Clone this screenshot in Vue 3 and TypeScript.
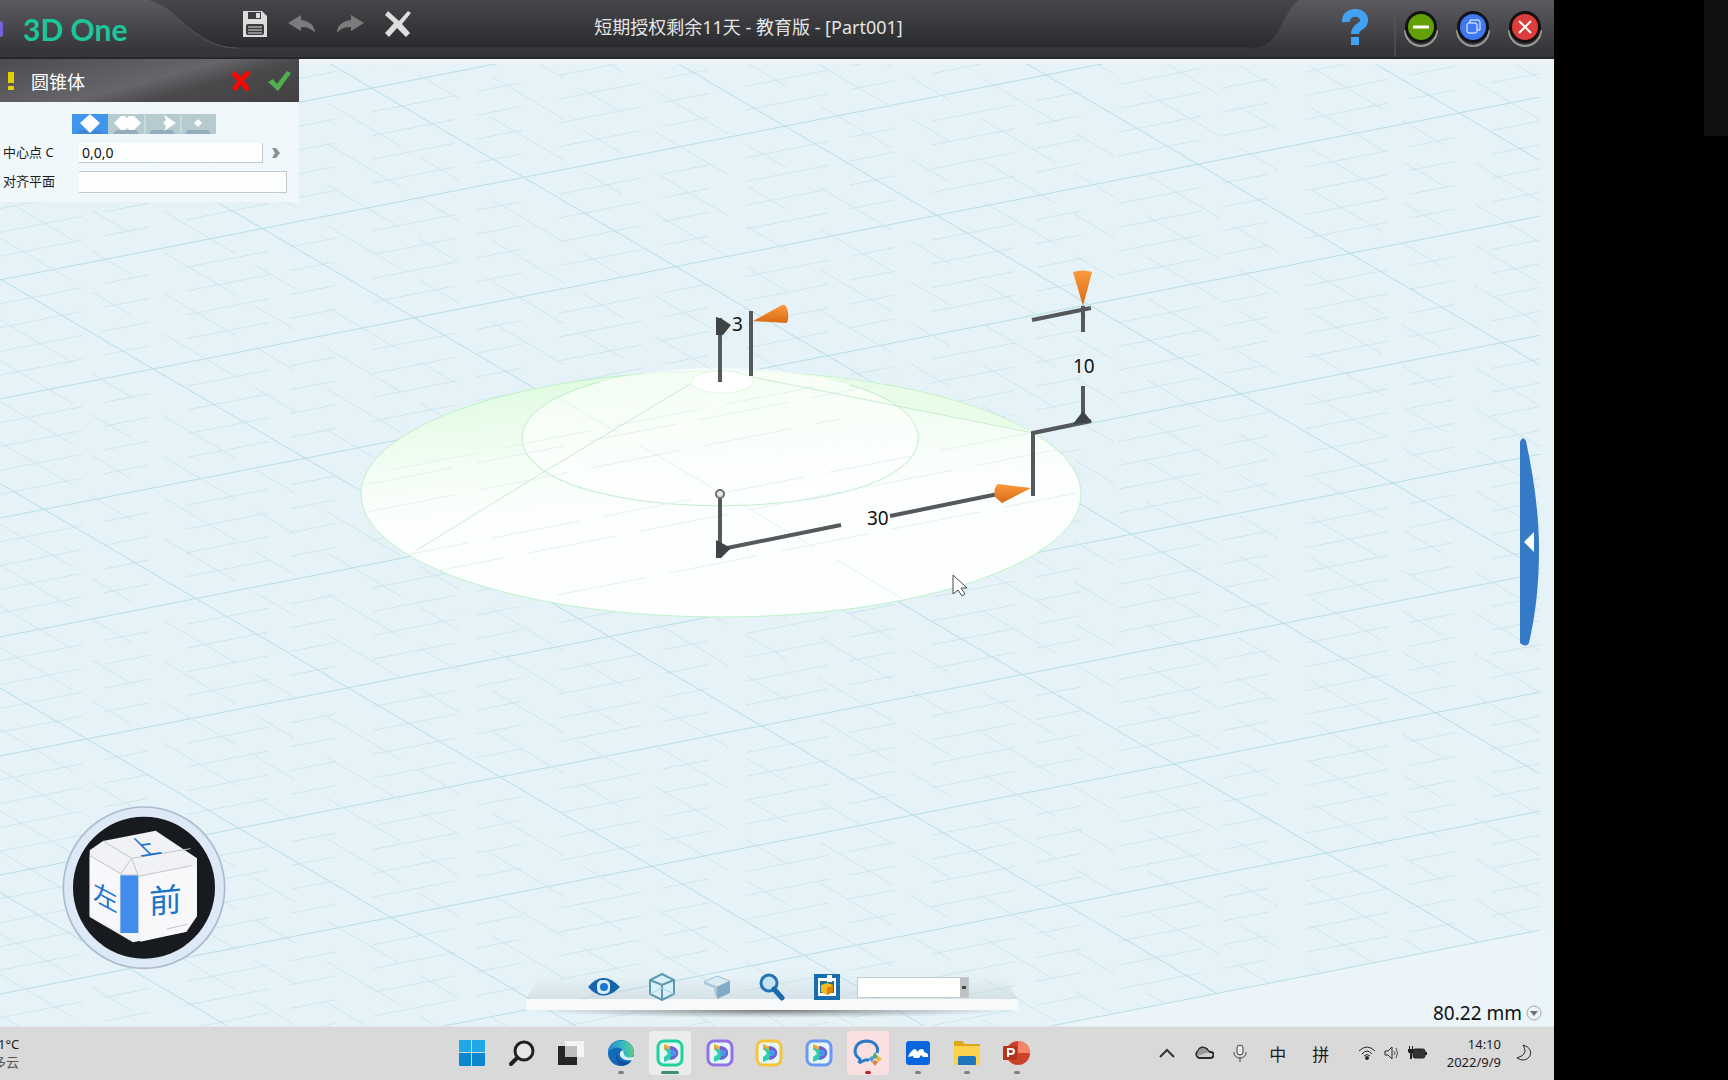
<script setup lang="ts">
import { ref } from 'vue'

interface GridLine {
  key: string
  x1: number
  y1: number
  x2: number
  y2: number
  major: boolean
}

const RISE = -0.196
const FALL = 0.587
const EDGE = 1232

function buildGrid(): GridLine[] {
  const lines: GridLine[] = []
  for (let i = 0; i <= 58; i++) {
    const b = EDGE - i * 23.8
    lines.push({ key: `a${i}`, x1: 0, y1: b, x2: 1540, y2: b + RISE * 1540, major: i % 5 === 0 })
  }
  for (let i = 0; i <= 50; i++) {
    const b = 1097 - i * 40.9
    // each falling line stops where it meets the front edge of the work plane
    const stop = Math.min(1540, (EDGE - b) / (FALL - RISE))
    lines.push({ key: `b${i}`, x1: 0, y1: b, x2: stop, y2: b + FALL * stop, major: i % 5 === 0 })
  }
  return lines
}

const grid = buildGrid()
const center = ref('0,0,0')
const plane = ref('')
const filter = ref('')
const mode = ref(0)
const modes = ['基体', '加运算', '减运算', '交运算']
const suite = [
  { name: '3D One 教育版', color: '#1fd19a', active: true },
  { name: '3D One Plus', color: '#9273e6', active: false },
  { name: '3D One Cut', color: '#f6c33c', active: false },
  { name: '3D One AI', color: '#6b97f5', active: false },
]
</script>

<template>
  <div class="screen">
    <main class="desktop">
      <header class="titlebar">
        <svg class="chrome" viewBox="0 0 1554 59" preserveAspectRatio="none" aria-hidden="true">
          <defs>
            <linearGradient id="side" x1="0" y1="0" x2="0" y2="1">
              <stop offset="0" stop-color="#5b5a5f" />
              <stop offset="0.6" stop-color="#414145" />
              <stop offset="1" stop-color="#303034" />
            </linearGradient>
            <linearGradient id="mid" x1="0" y1="0" x2="0" y2="1">
              <stop offset="0" stop-color="#47474a" />
              <stop offset="1" stop-color="#292b2e" />
            </linearGradient>
          </defs>
          <rect width="1554" height="59" fill="url(#side)" />
          <rect y="48" width="1554" height="11" fill="#34363a" />
          <path d="M148 0C170 7 178 20 194 32C210 43 220 48 238 48H1250C1282 48 1278 18 1299 0Z" fill="url(#mid)" />
          <path d="M148 0C170 7 178 20 194 32C210 43 220 48 238 48" fill="none" stroke="#58585c" />
          <path d="M238 48H1250" stroke="#3e4144" />
          <path d="M1395 12V59" stroke="#5c5c60" />
          <path d="M0 58H1554" stroke="#27272a" stroke-width="2" />
        </svg>
        <div class="brand"><span class="badge"></span>3D One</div>
        <div class="quick">
          <button aria-label="保存">
            <svg width="26" height="28" viewBox="0 0 26 28"><path d="M1 1H20L25 6V27H1Z" fill="#dcdcdc" /><path d="M6 2H19V9H6Z" fill="#3c3c3f" /><path d="M14 3H18V8H14Z" fill="#dcdcdc" /><rect x="4" y="14" width="18" height="11" rx="2" fill="#3c3c3f" /><path d="M6 17H20M6 20H20M6 23H20" stroke="#dcdcdc" /></svg>
          </button>
          <button aria-label="撤销">
            <svg width="28" height="20" viewBox="0 0 28 20"><path d="M0 9L13 1V6C22 7 27 12 27 19C23 14 19 13 13 13V17Z" fill="#7b7b7d" /></svg>
          </button>
          <button aria-label="重做">
            <svg width="28" height="20" viewBox="0 0 28 20"><path d="M28 9L15 1V6C6 7 1 12 1 19C5 14 9 13 15 13V17Z" fill="#7b7b7a" /></svg>
          </button>
          <button aria-label="删除">
            <svg width="28" height="28" viewBox="0 0 28 28"><path d="M4 1L15 11L24 1L27 3L18 14L26 23L22 27L13 18L5 27L1 23L10 13L1 5Z" fill="#dedede" /></svg>
          </button>
        </div>
        <h1 class="title">短期授权剩余11天 - 教育版 - [Part001]</h1>
        <div class="window-controls">
          <button class="help" aria-label="帮助">
            <svg width="28" height="38" viewBox="0 0 28 38"><path d="M5 13C4 1 24 1 23 12C23 18 14 17 14 25" fill="none" stroke="#42a2f1" stroke-width="8" /><path d="M10 28H18V36H10Z" fill="#42a2f1" /></svg>
          </button>
          <button aria-label="最小化">
            <svg width="36" height="40" viewBox="0 0 36 40"><path d="M2 22A16 16 0 0 0 34 22" fill="none" stroke="#9a9a94" stroke-width="2" /><circle cx="18" cy="19" r="16" fill="#111512" /><circle cx="18" cy="19" r="13" fill="#62a006" /><path d="M10 19H26" stroke="#fff" stroke-width="3" /></svg>
          </button>
          <button aria-label="还原">
            <svg width="36" height="40" viewBox="0 0 36 40"><path d="M2 22A16 16 0 0 0 34 22" fill="none" stroke="#9a9a94" stroke-width="2" /><circle cx="18" cy="19" r="16" fill="#10131c" /><circle cx="18" cy="19" r="13" fill="#3f78f0" /><rect x="12" y="15" width="10" height="10" rx="2" fill="none" stroke="#fff" /><path d="M15 15V12H23Q25 12 25 14V22H22" fill="none" stroke="#fff" /></svg>
          </button>
          <button aria-label="关闭">
            <svg width="36" height="40" viewBox="0 0 36 40"><path d="M2 22A16 16 0 0 0 34 22" fill="none" stroke="#9a9a94" stroke-width="2" /><circle cx="18" cy="19" r="16" fill="#170f10" /><circle cx="18" cy="19" r="13" fill="#dd3d3c" /><path d="M12 13L24 25M24 13L12 25" stroke="#fff" stroke-width="2" /></svg>
          </button>
        </div>
      </header>

      <section class="viewport">
        <svg class="scene" viewBox="0 59 1554 967" preserveAspectRatio="xMidYMid slice" role="img" aria-label="圆锥体预览">
          <defs>
            <linearGradient id="cone" x1="0.25" y1="0" x2="0.45" y2="0.8">
              <stop offset="0" stop-color="#defbdd" />
              <stop offset="0.4" stop-color="#f3fef3" />
              <stop offset="0.7" stop-color="#fff" />
            </linearGradient>
            <linearGradient id="amber" x1="0" y1="0" x2="0" y2="1">
              <stop offset="0" stop-color="#fb9a3c" />
              <stop offset="1" stop-color="#d96a14" />
            </linearGradient>
          </defs>
          <rect y="59" width="1554" height="967" fill="#e8f4f8" />
          <path d="M0 59H1554V927L0 1232Z" fill="#e5f3f8" />
          <path d="M0 1232L1540 930V1026H0Z" fill="#ebf4f9" />
          <line v-for="l in grid" :key="l.key" :x1="l.x1" :y1="l.y1" :x2="l.x2" :y2="l.y2" :class="l.major ? 'major' : 'minor'" />
          <path d="M0 59H1554V64H0Z" fill="#eef4f7" />
          <ellipse cx="721" cy="494" rx="360" ry="123" fill="url(#cone)" fill-opacity="0.94" stroke="#bdf3c8" />
          <path d="M721 371C850 371 960 395 1033 432L753 377Z" fill="#e9fce7" />
          <ellipse cx="720" cy="437" rx="198" ry="69" fill="#fff" fill-opacity="0.6" />
          <path d="M600 382C492 410 500 470 600 493C670 510 770 510 840 493C940 470 945 412 850 385" fill="none" stroke="#bfeecb" />
          <g class="cone-grid">
            <path d="M380 560L1050 429M445 617L1076 493M540 387L905 600M390 470L900 370M364 485L1000 361M367 512L840 419M416 575L1076 446" />
          </g>
          <path d="M690 384L547 470L417 550M752 377L1033 433" fill="none" stroke="#c9ecd2" />
          <ellipse cx="722" cy="382" rx="31" ry="11" fill="#fff" stroke="#e0f8e2" />
          <g stroke="#55595c" stroke-width="4" fill="none">
            <path d="M720 318V382M751 311V376M720 498V557M1033 496V433L1091 421M1083 386V414M1083 306V332M1032 320L1091 308M722 549L841 525M890 516L998 494" />
          </g>
          <path d="M716 317L722 319L731 325L723 335H716ZM716 540L731 548L721 558H716ZM1083 411L1073 424L1092 422Z" fill="#3e4347" />
          <circle cx="720" cy="494" r="4" fill="#e5e8e8" stroke="#6c7073" stroke-width="2" />
          <g fill="url(#amber)">
            <path d="M753 321L782 305Q786 303 788 312Q789 322 786 323Z" />
            <path d="M1031 488L998 484Q993 488 995 497L1002 503Z" />
            <path d="M1083 306L1073 272Q1083 269 1092 272Z" />
          </g>
          <g class="dimension">
            <text x="732" y="331">3</text>
            <text x="867" y="525">30</text>
            <text x="1073" y="373">10</text>
          </g>
          <path d="M953 575V594L958 590L962 596L965 594L961 588H967Z" fill="#fff" stroke="#4b4b4b" />
        </svg>

        <form class="panel" @submit.prevent>
          <div class="panel-head">
            <svg width="8" height="18" viewBox="0 0 8 18" aria-hidden="true"><path d="M1 0H7V11H1ZM1 14H7V18H1Z" fill="#e3cf00" /></svg>
            <h2>圆锥体</h2>
            <button type="button" aria-label="取消">
              <svg width="22" height="22" viewBox="0 0 22 22"><path d="M3 3Q10 9 18 20M19 2Q10 10 4 20" stroke="#fb0505" stroke-width="5" fill="none" /></svg>
            </button>
            <button type="submit" aria-label="确定">
              <svg width="24" height="22" viewBox="0 0 24 22"><path d="M0 12L5 9L9 14L19 1L23 3L10 21Z" fill="#4fb04e" /></svg>
            </button>
          </div>
          <div class="modes">
            <button v-for="(m, i) in modes" :key="m" type="button" :aria-label="m" :class="{ on: mode === i }" @click="mode = i">
              <svg width="36" height="20" viewBox="0 0 36 20">
                <path d="M8 16H28L31 20H5Z" fill="#456a8d" fill-opacity="0.3" />
                <path v-if="i === 0" d="M18 0L28 9L18 19L8 9Z" fill="#fff" />
                <path v-else-if="i === 1" d="M6 9L13 2H17L19 4L21 2H26L33 9L26 16H21L19 14L17 16H13Z" fill="#fff" />
                <path v-else-if="i === 2" d="M20 1L32 9L20 17L22 12L19 9L22 6Z" fill="#fff" />
                <path v-else d="M18 5L22 9L18 13L14 9Z" fill="#fff" />
                <path v-if="i > 1" d="M1 1V19" stroke="#d9e8eb" />
              </svg>
            </button>
          </div>
          <div class="field">
            <label for="center">中心点 C</label>
            <input id="center" v-model="center" class="point" type="text" />
            <button type="button" aria-label="更多">
              <svg width="10" height="10" viewBox="0 0 10 10"><path d="M0 0H4L8 5L4 10H0L3 5Z" fill="#8b9196" /></svg>
            </button>
          </div>
          <div class="field">
            <label for="plane">对齐平面</label>
            <input id="plane" v-model="plane" class="plane" type="text" />
          </div>
        </form>

        <svg class="nav-cube" width="166" height="166" viewBox="182 76 498 498" role="img" aria-label="视图导航">
          <circle cx="431" cy="324" r="242" fill="#dde9f6" stroke="#a9bbcd" stroke-width="5" />
          <circle cx="431" cy="324" r="213" fill="#171a1f" />
          <path d="M268 212L308 184L466 153L590 236V410L558 456L398 488L268 412Z" fill="#f1f2f6" />
          <path d="M268 228L360 286V458L268 408Z" fill="#f8f8fc" />
          <path d="M414 290L578 258L590 270V404L558 456L420 486Z" fill="#f8f8fb" />
          <path d="M360 286H414V460H360Z" fill="#418cec" />
          <path d="M268 228L362 282L394 236L308 184M394 236L570 207M394 236L414 290L574 258M360 286H414M500 448L560 434" fill="none" stroke="#c2c5cb" stroke-width="3" />
          <g class="face">
            <text x="446" y="456" font-size="98" transform="skewY(-6) translate(0 -6)">前</text>
            <text x="278" y="212" font-size="74" transform="skewY(28)">左</text>
            <text x="0" y="0" font-size="68" transform="translate(420 230) rotate(-9) skewX(36)">上</text>
          </g>
        </svg>

        <div class="view-tools">
          <div class="tool-row">
            <button aria-label="显示">
              <svg width="32" height="20" viewBox="0 0 32 20"><path d="M0 10Q15 -8 32 10Q15 27 0 10Z" fill="#1765ad" /><rect x="9" y="3" width="13" height="14" rx="5" fill="#d8ecfa" /><circle cx="16" cy="10" r="4" fill="#1b76d2" /></svg>
            </button>
            <button aria-label="线框">
              <svg width="26" height="28" viewBox="0 0 26 28"><path d="M13 1L25 7V21L13 27L1 21V7Z" fill="#d7f0f7" stroke="#6097ad" stroke-width="2" /><path d="M1 7L13 12L25 7M13 12V27" fill="none" stroke="#6097ad" stroke-width="2" /><path d="M1 21L13 15L25 21" fill="none" stroke="#b0d2de" /></svg>
            </button>
            <button aria-label="着色">
              <svg width="26" height="24" viewBox="0 0 26 24"><path d="M0 7L13 1L26 6L13 12Z" fill="#d9ecf3" stroke="#a6bccc" /><path d="M0 7L13 12V23L11 20L10 13L0 9Z" fill="#a9c8da" /><path d="M13 12L26 6V18L13 24Z" fill="#83abc8" /></svg>
            </button>
            <button aria-label="缩放">
              <svg width="26" height="28" viewBox="0 0 26 28"><circle cx="10" cy="10" r="8" fill="#c3e3f0" stroke="#2474b5" stroke-width="3" /><path d="M15 16L23 25" stroke="#1b69ac" stroke-width="5" stroke-linecap="round" /></svg>
            </button>
            <button aria-label="选择实体">
              <svg width="26" height="26" viewBox="0 0 26 26"><rect width="26" height="26" fill="#176daf" /><rect x="4" y="4" width="18" height="18" fill="#fff" /><path d="M6 7H20V19H6Z" fill="#187093" /><path d="M13 1H18V8H13Z" fill="#fff" /><path d="M7 11L13 9L19 11V18L13 21L7 18Z" fill="#f5ba22" /><path d="M13 14L19 11V18L13 21Z" fill="#d98310" /></svg>
            </button>
            <select v-model="filter" aria-label="过滤器"><option value=""></option></select>
          </div>
          <div class="shelf"></div>
          <div class="shelf-shadow"></div>
        </div>

        <button class="drawer" aria-label="展开资源库">
          <svg width="20" height="210" viewBox="0 0 20 210"><path d="M0 4Q3 -3 6 3C14 40 19 78 19 110C19 150 15 178 9 205Q6 210 0 205Z" fill="#347ac7" /><path d="M4 104L14 94V114Z" fill="#fff" /></svg>
        </button>

        <div class="measure">
          <span>80.22 mm</span>
          <button aria-label="单位">
            <svg width="16" height="16" viewBox="0 0 16 16"><circle cx="8" cy="8" r="7" fill="#eef3f5" stroke="#a2aaae" /><path d="M4 6H12L8 11Z" fill="#697176" /></svg>
          </button>
        </div>
      </section>

      <footer class="taskbar">
        <div class="weather"><span class="temp">1°C</span><span class="sky">多云</span></div>
        <nav class="apps">
          <button aria-label="开始"><svg width="26" height="26" viewBox="0 0 26 26"><path d="M0 1Q0 0 1 0H12V12H0ZM13 0H25Q26 0 26 1V12H13Z" fill="#20a7e8" /><path d="M0 13H12V26H1Q0 26 0 25ZM13 13H26V25Q26 26 25 26H13Z" fill="#0d86d2" /></svg></button>
          <button aria-label="搜索"><svg width="26" height="26" viewBox="0 0 26 26"><circle cx="15" cy="11" r="9" fill="#e5e5e6" stroke="#202124" stroke-width="3" /><path d="M8 18L2 24" stroke="#202124" stroke-width="4" stroke-linecap="round" /></svg></button>
          <button aria-label="任务视图"><svg width="28" height="26" viewBox="0 0 28 26"><path d="M1 6H20V25H1Z" fill="#242526" /><path d="M8 1H27V17H8Z" fill="#f4f4f4" /><path d="M8 6H20V17H8Z" fill="#bdbebe" /></svg></button>
          <button aria-label="Edge" class="running">
            <svg width="28" height="28" viewBox="0 0 28 28">
              <defs><linearGradient id="edge" x1="0" y1="0.3" x2="1" y2="0.2"><stop offset="0" stop-color="#2584cb" /><stop offset="0.6" stop-color="#38bcc2" /><stop offset="1" stop-color="#63cf70" /></linearGradient></defs>
              <circle cx="14" cy="14" r="13" fill="#126bb7" />
              <path d="M1 13C2 -1 24 -3 27 12C28 20 19 22 17 17C19 9 9 5 1 13Z" fill="url(#edge)" />
              <path d="M16 11C10 13 12 23 26 21L28 17C22 20 17 18 17 15Z" fill="#d9eef6" />
              <path d="M10 13C9 21 16 25 24 22C17 31 6 26 10 13Z" fill="#164e9c" />
            </svg>
          </button>
          <button v-for="app in suite" :key="app.name" :aria-label="app.name" :class="{ current: app.active }">
            <svg width="28" height="28" viewBox="0 0 28 28">
              <rect x="2" y="2" width="24" height="24" rx="6" fill="#e6f7f6" :stroke="app.color" stroke-width="3" />
              <path d="M8 5L15 8V13L8 11Z" fill="#f3aa34" />
              <path d="M8 8L16 12L15 20L8 23V18L12 15Z" fill="#2ccfae" />
              <path d="M14 7C25 8 25 20 14 21L15 17C19 16 19 12 14 11Z" fill="#705edb" />
              <circle cx="17" cy="14" r="3" fill="#4b98ea" />
            </svg>
          </button>
          <button aria-label="企业微信" class="alert">
            <svg width="30" height="28" viewBox="0 0 30 28"><path d="M6 24L7 20C-1 15 1 3 13 2C22 2 26 8 24 14M6 24L12 21H16" fill="none" stroke="#2b79c8" stroke-width="3" stroke-linejoin="round" /><path d="M22 13L25 18L22 20L19 18Z" fill="#3fae7c" /><path d="M25 17L29 20L25 23L23 20Z" fill="#efb338" /><path d="M22 21L25 23L22 27L19 23Z" fill="#e2803c" /><path d="M19 17L21 20L19 23L15 20Z" fill="#4c9bd6" /></svg>
          </button>
          <button aria-label="腾讯会议" class="running"><svg width="26" height="26" viewBox="0 0 26 26"><rect x="1" y="1" width="24" height="24" rx="3" fill="#0867df" /><path d="M3 17Q4 13 9 9Q12 9 12 12Q14 9 17 9Q19 9 19 12Q24 13 23 17H18L16 15L14 18H9L8 16Z" fill="#fff" /></svg></button>
          <button aria-label="文件资源管理器" class="running"><svg width="28" height="26" viewBox="0 0 28 26"><path d="M1 1H9L12 4H27V24H1Z" fill="#dba81c" /><path d="M1 6H27V24Q27 25 26 25H2Q1 25 1 24Z" fill="#fcd14d" /><path d="M5 18Q5 16 7 16H21Q23 16 23 18V25H5Z" fill="#2175bd" /></svg></button>
          <button aria-label="PowerPoint" class="running"><svg width="28" height="28" viewBox="0 0 28 28"><circle cx="15" cy="14" r="12" fill="#cc432b" /><path d="M15 2A12 12 0 0 1 27 14H15Z" fill="#f58668" /><rect x="0" y="7" width="14" height="14" rx="1" fill="#b8331d" /><path d="M5 18V10H8Q11 10 11 12Q11 15 8 15H5" fill="none" stroke="#fff" stroke-width="2" /></svg></button>
        </nav>
        <div class="tray">
          <button aria-label="显示隐藏的图标"><svg width="16" height="10" viewBox="0 0 16 10"><path d="M1 9L8 2L15 9" fill="none" stroke="#333" stroke-width="2" /></svg></button>
          <button aria-label="OneDrive"><svg width="20" height="14" viewBox="0 0 20 14"><path d="M5 12A4 4 0 0 1 4 5Q7 -1 13 3Q14 6 17 6A3 3 0 0 1 16 12Z" fill="#cfcfcf" stroke="#292929" stroke-width="2" /><path d="M4 5Q7 0 12 3L15 6L9 8L3 10Z" fill="#999" /></svg></button>
          <button aria-label="麦克风"><svg width="14" height="18" viewBox="0 0 14 18"><rect x="4" y="1" width="6" height="10" rx="3" fill="#e8e8e8" stroke="#444" /><path d="M1 8Q1 14 7 14Q13 14 13 8M7 14V18" fill="none" stroke="#444" /></svg></button>
          <button class="ime">中</button>
          <button class="ime">拼</button>
          <button class="status" aria-label="网络、音量和电池">
            <svg width="18" height="14" viewBox="0 0 18 14"><path d="M1 5Q9 -3 17 5M4 8Q9 2 14 8M6 10Q9 7 12 10" fill="none" stroke="#292929" /><circle cx="9" cy="12" r="2" fill="#292929" /></svg>
            <svg width="16" height="14" viewBox="0 0 16 14"><path d="M1 5H4L8 1V13L4 9H1Z" fill="none" stroke="#292929" /><path d="M10 5Q12 7 10 9M12 2Q15 7 12 12" fill="none" stroke="#555" /></svg>
            <svg width="20" height="14" viewBox="0 0 20 14"><rect x="5" y="3" width="12" height="9" rx="2" fill="#333" stroke="#222" /><path d="M0 3H6V6Q3 9 0 6ZM1 0H2V3H1ZM4 0H5V3H4ZM2 7H4V13H2ZM17 6H19V9H17Z" fill="#222" /></svg>
          </button>
          <button class="clock"><span>14:10</span><span>2022/9/9</span></button>
          <button aria-label="专注助手"><svg width="16" height="18" viewBox="0 0 16 18"><path d="M7 1Q17 4 14 12Q9 19 1 14Q8 12 9 8Q9 4 7 1Z" fill="none" stroke="#292929" stroke-width="1" /></svg></button>
        </div>
      </footer>
    </main>
    <aside class="letterbox"><div class="sliver"></div></aside>
  </div>
</template>

<style>
body {
  margin: 0;
  background: #000;
}
</style>

<style scoped>
.screen {
  display: flex;
  min-height: 100vh;
  font-family: "Noto Sans", "Noto Sans CJK SC", sans-serif;
  color: #1c1c1c;
}
button {
  display: flex;
  align-items: center;
  justify-content: center;
  padding: 0;
  border: 0;
  background: none;
  color: inherit;
  font: inherit;
}
svg {
  display: block;
  flex: none;
}
.desktop {
  display: flex;
  flex: 1;
  flex-direction: column;
  min-width: 0;
}
.letterbox {
  display: flex;
  justify-content: flex-end;
  flex: none;
  width: 174px;
  background: #000;
}
.sliver {
  width: 24px;
  height: 136px;
  background: #111;
}
.titlebar {
  position: relative;
  display: flex;
  align-items: flex-start;
  height: 59px;
}
.titlebar > * {
  position: relative;
}
.titlebar > .chrome {
  position: absolute;
  width: 100%;
  height: 100%;
}
.brand {
  display: flex;
  align-items: center;
  gap: 20px;
  width: 242px;
  height: 58px;
  color: #1bc79b;
  font: bold 30px/58px Lato, sans-serif;
}
.badge {
  width: 3px;
  height: 16px;
  border-radius: 0 4px 4px 0;
  background: #7461dc;
}
.quick {
  display: flex;
  align-items: center;
  gap: 20px;
  height: 47px;
}
.title {
  flex: 1;
  margin: 0;
  padding-right: 256px;
  color: #e4e4e4;
  font-size: 18px;
  font-weight: 400;
  line-height: 54px;
  text-align: center;
}
.window-controls {
  display: flex;
  align-items: center;
  gap: 16px;
  height: 56px;
  padding-right: 11px;
}
.help {
  margin-right: 18px;
}
.viewport {
  position: relative;
  flex: 1;
  min-height: 600px;
  overflow: hidden;
}
.scene {
  position: absolute;
  width: 100%;
  height: 100%;
}
.major {
  stroke: #b6dfe5;
}
.minor {
  stroke: #cfe6ec;
  stroke-dasharray: 84 22 46 38;
}
.cone-grid {
  fill: none;
  stroke: #e4f2ee;
  stroke-dasharray: 90 24;
}
.dimension {
  fill: #111;
  font-size: 19px;
}
.panel {
  position: relative;
  width: 299px;
  height: 143px;
  background: rgba(242, 248, 251, 0.92);
}
.panel-head {
  display: flex;
  align-items: center;
  gap: 16px;
  height: 43px;
  padding: 0 7px;
  background: linear-gradient(165deg, #4c4c4f 0%, #66656a 50%, #4a4a4c 66%, #414143 100%);
}
.panel-head h2 {
  flex: 1;
  margin: 0;
  color: #fff;
  font-size: 18px;
  font-weight: 400;
}
.modes {
  display: flex;
  margin: 12px 0 8px 72px;
}
.modes button {
  background: #b5cbd0;
}
.modes .on {
  background: #3f95ed;
}
.field {
  display: flex;
  align-items: center;
  height: 22px;
  margin-bottom: 7px;
  padding-left: 3px;
  font-size: 13px;
}
.field label {
  width: 76px;
  line-height: 20px;
  padding-bottom: 2px;
}
.field input {
  box-sizing: border-box;
  height: 22px;
  padding: 0 3px;
  border: 1px solid #c3c9cc;
  background: #fcfefe;
  color: #111;
  font: 14px "Noto Sans", sans-serif;
}
.field .point {
  width: 184px;
  height: 20px;
  margin-right: 9px;
  border-width: 0 1px 1px 0;
}
.field .plane {
  width: 208px;
  border-left: 0;
}
.nav-cube {
  position: absolute;
  left: 61px;
  bottom: 55px;
}
.face {
  fill: #1a74cd;
  font-family: "Noto Sans CJK SC", sans-serif;
}
.view-tools {
  position: absolute;
  bottom: 8px;
  left: 526px;
  width: 492px;
}
.tool-row {
  position: relative;
  display: flex;
  align-items: center;
  gap: 29px;
  height: 24px;
  padding-left: 62px;
}
.tool-row::before {
  position: absolute;
  inset: 0;
  background: linear-gradient(to bottom, transparent, rgba(190, 200, 205, 0.4));
  clip-path: polygon(3% 0, 97% 0, 100% 100%, 0 100%);
  content: "";
}
.tool-row > * {
  position: relative;
}
.tool-row select {
  appearance: none;
  width: 112px;
  height: 21px;
  margin-left: -12px;
  border: 1px solid #c5cacd;
  border-radius: 0;
  background-image: linear-gradient(#444, #444), linear-gradient(to right, #fff 102px, #bfc2c4 102px);
  background-position: right 2px center, 0 0;
  background-repeat: no-repeat;
  background-size: 4px 3px, 100% 100%;
}
.shelf {
  height: 11px;
  background: #f8f9fa;
}
.shelf-shadow {
  height: 8px;
  background: radial-gradient(ellipse at top, #777 0%, rgba(150, 155, 158, 0.6) 35%, transparent 70%);
}
.drawer {
  position: absolute;
  top: 379px;
  right: 14px;
}
.measure {
  position: absolute;
  right: 12px;
  bottom: 0;
  display: flex;
  align-items: center;
  gap: 4px;
  color: #101010;
  font-size: 19px;
}
.taskbar {
  display: flex;
  align-items: center;
  height: 54px;
  background: #d9d9da;
  box-shadow: inset 0 1px #e8eaea;
}
.weather {
  display: flex;
  flex-direction: column;
  flex: none;
  width: 451px;
  overflow: hidden;
  font-size: 13px;
  line-height: 18px;
}
.temp {
  margin-left: -2px;
}
.sky {
  margin-left: -7px;
  color: #555;
}
.apps {
  display: flex;
  flex: none;
  justify-content: space-between;
  width: 587px;
}
.apps button {
  position: relative;
  width: 42px;
  height: 44px;
  border-radius: 4px;
}
.apps .current {
  background: #ebeded;
}
.apps .alert {
  background: #fbe0e1;
}
.apps .running::after,
.apps .current::after,
.apps .alert::after {
  position: absolute;
  bottom: 1px;
  width: 6px;
  height: 3px;
  border-radius: 2px;
  background: #7e8183;
  content: "";
}
.apps .current::after {
  width: 18px;
  background: #3f8d79;
}
.apps .alert::after {
  background: #bd2630;
}
.tray {
  display: flex;
  flex: 1;
  align-items: center;
  justify-content: flex-end;
  gap: 19px;
  padding-right: 22px;
}
.ime {
  width: 24px;
  font-size: 17px;
}
.status {
  gap: 8px;
  margin-left: 6px;
}
.clock {
  flex-direction: column;
  align-items: flex-end;
  margin-right: -4px;
  font-size: 13px;
  line-height: 18px;
}
</style>
